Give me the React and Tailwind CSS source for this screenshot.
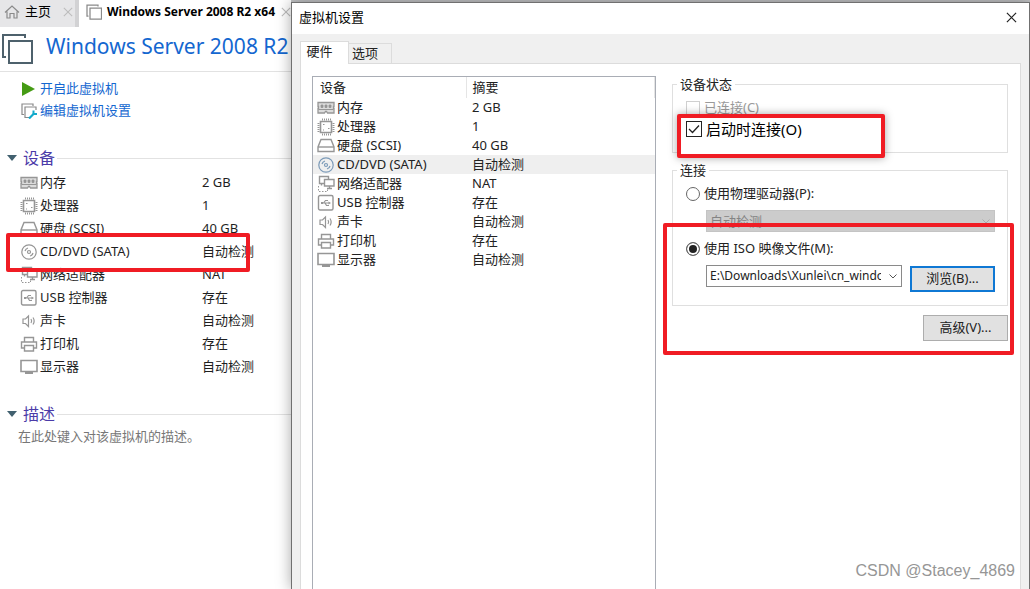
import React from 'react';
import clsx from 'clsx';

const icons = {
  memory: (
    <>
      <path d="M1 3.5h16v4h-.5v2h.5v4.500h-6.500l-1-1.500h-1l-1 1.500H1V9.500h.5v-2H1z" fill="#dcdcdc" strokeWidth="1.300" />
      <path d="M1.500 10.500h15" />
      <path d="M4 6h2v2.500H4zM8 6h2v2.500H8zM12 6h2v2.500h-2z" fill="#969696" strokeWidth="0.8" />
    </>
  ),
  cpu: (
    <>
      <path d="M3.500 3.500h11v11h-11z" strokeWidth="1.600" />
      <path d="M5.500.5v2M7.500.5v2M9.500.5v2M11.500.5v2M13.500.5v2M5.500 15.500v2M7.500 15.500v2M9.500 15.500v2M11.500 15.500v2M13.500 15.500v2M.5 5.500h2M.5 7.500h2M.5 9.500h2M.5 11.500h2M.5 13.500h2M15.500 5.500h2M15.500 7.500h2M15.500 9.500h2M15.500 11.500h2M15.500 13.500h2" />
      <path d="M6 6.500h1.500M11 10.500h1.500M6 12h1" strokeWidth="1.200" />
    </>
  ),
  disk: (
    <>
      <path d="M4 2.500h10l3 7.500v4.500H1V10z" strokeWidth="1.400" />
      <path d="M1 10h16" strokeWidth="1.400" />
    </>
  ),
  cd: (
    <>
      <circle cx="9" cy="9" r="7.200" strokeWidth="1.200" />
      <circle cx="9" cy="9" r="1.500" strokeWidth="1.200" />
      <path d="M5 8A4.300 4.300 0 0 1 8 5M13 10a4.300 4.300 0 0 1-3 3" strokeWidth="1.200" />
    </>
  ),
  network: (
    <>
      <path d="M7 8.500H2.500v-7h9v3" strokeWidth="1.400" />
      <path d="M4.500 8.500v2" strokeWidth="1.400" />
      <path d="M7.500 4.500h9.500v6.500H7.500zM12.500 11v2.500M10 13.500h5" fill="#fff" strokeWidth="1.400" />
      <path d="M1.500 11v5.500h9V14.500" strokeDasharray="1.500 1.500" />
    </>
  ),
  usb: (
    <>
      <rect x="1.500" y="1.500" width="14.500" height="14.500" rx="1.500" strokeWidth="1.400" />
      <path d="M5 9h7M6.500 9l2-2.500h2.500M8 9l1.500 2.500H12" strokeWidth="1.200" />
      <path d="M11.500 7.500v3l2.500-1.500zM4 8h2v2H4z" fill="currentColor" stroke="none" />
    </>
  ),
  sound: (
    <>
      <path d="M3 7h2.500L8.500 4v10.500l-3-3H3z" strokeWidth="1.200" />
      <path d="M11 7q1.300 2 0 4M13 5.500q2.300 3.500 0 7" strokeWidth="1.200" />
    </>
  ),
  printer: (
    <>
      <path d="M4.500 7V2.500h9V7" strokeWidth="1.400" />
      <path d="M4.500 13H1.500V7h15v6h-3" strokeWidth="1.400" />
      <path d="M4.500 10.500h9v5.500h-9z" strokeWidth="1.400" />
    </>
  ),
  display: (
    <>
      <path d="M1 2.500h16v11H1z" strokeWidth="1.600" />
      <path d="M5 15h8" strokeWidth="2" />
    </>
  ),
};

const devices = [
  { icon: 'memory', name: '内存', summary: '2 GB' },
  { icon: 'cpu', name: '处理器', summary: '1' },
  { icon: 'disk', name: '硬盘 (SCSI)', summary: '40 GB' },
  { icon: 'cd', name: 'CD/DVD (SATA)', summary: '自动检测' },
  { icon: 'network', name: '网络适配器', summary: 'NAT' },
  { icon: 'usb', name: 'USB 控制器', summary: '存在' },
  { icon: 'sound', name: '声卡', summary: '自动检测' },
  { icon: 'printer', name: '打印机', summary: '存在' },
  { icon: 'display', name: '显示器', summary: '自动检测' },
];

const DeviceIcon = ({ name, className }) => (
  <svg
    viewBox="0 0 18 18"
    className={clsx('size-[18px] shrink-0', className)}
    fill="none"
    stroke="currentColor"
    aria-hidden="true"
  >
    {icons[name]}
  </svg>
);

const Cross = ({ className }) => (
  <svg viewBox="0 0 12 12" className={className} fill="none" stroke="currentColor" aria-hidden="true">
    <path d="M1 1l10 10M11 1L1 11" strokeWidth="1.300" />
  </svg>
);

const Windows = ({ className, strokeWidth }) => (
  <svg viewBox="0 0 32 32" className={className} fill="none" stroke="currentColor" strokeWidth={strokeWidth} aria-hidden="true">
    <path d="M5 24H2V2h22v3" />
    <path d="M8 8h23v22H8z" />
  </svg>
);

const SectionTitle = ({ children }) => (
  <div className="flex h-5 items-center pl-[7px]">
    <svg viewBox="0 0 10 6" className="h-[6px] w-[10px] text-[#41606f]" fill="currentColor" aria-hidden="true">
      <path d="M0 0h10L5 6z" />
    </svg>
    <h2 className="ml-[6px] text-[16px] leading-5 text-[#4b3ba8]">{children}</h2>
    <div className="ml-[2px] h-px flex-1 bg-[#e2e2e2]" />
  </div>
);

const Select = ({ className, children, ...props }) => (
  <div className={clsx('relative h-[22px]', className)}>
    <select
      {...props}
      className="h-full w-full appearance-none border border-[#8a8a8a] bg-white pr-5 pl-[3px] text-[12px] leading-5 text-[#222] opacity-100 outline-none disabled:border-[#c4c4c4] disabled:bg-[#cccccc] disabled:text-[13px] disabled:text-[#848484]"
    >
      {children}
    </select>
    <svg
      viewBox="0 0 8 5"
      className={clsx('pointer-events-none absolute top-[9px] right-[5px] h-[5px] w-2', props.disabled ? 'text-[#aaa]' : 'text-[#555]')}
      fill="none"
      stroke="currentColor"
      aria-hidden="true"
    >
      <path d="M.5.5L4 4 7.500.5" />
    </svg>
  </div>
);

const Radio = ({ label, ...props }) => (
  <label className="flex h-4 items-center">
    <input
      type="radio"
      name="connection"
      {...props}
      className="mr-1 size-[14px] appearance-none rounded-full border border-[#666] bg-white checked:bg-[#222] checked:shadow-[inset_0_0_0_2px_#fff]"
    />
    {label}
  </label>
);

const MainWindow = () => (
  <main className="w-[291px] shrink-0 overflow-hidden bg-white whitespace-nowrap">
    {/* Tabs */}
    <div className="flex h-[27px] bg-[#e6e6e8] text-black">
      <div className="flex w-[80px] items-center pb-[3px] pl-1">
        <svg viewBox="0 0 16 16" className="size-4 text-[#8a8a8a]" fill="none" stroke="currentColor" strokeWidth="1.200" aria-hidden="true">
          <path d="M1 8.500L8 2l7 6.500M3 7.500V14h3V9.500h4V14h3V7.500" />
        </svg>
        <button className="ml-[5px] text-[13px]">主页</button>
        <button aria-label="关闭主页" className="ml-3 text-[#bdbdbd]">
          <Cross className="size-[10px]" />
        </button>
      </div>
      <div className="w-1 bg-[#d2d2d4]" />
      <div className="flex flex-1 items-center bg-white pb-[3px] pl-[7px]">
        <Windows className="size-4 shrink-0 text-[#8a8a8a]" strokeWidth="2.500" />
        <button className="ml-[5px] text-[12px] font-bold">Windows Server 2008 R2 x64</button>
        <button aria-label="关闭标签页" className="ml-[6px] text-[#bdbdbd]">
          <Cross className="size-[10px]" />
        </button>
      </div>
    </div>

    <header className="flex h-[45px] items-center border-b border-[#e2e2e2] pb-1 pl-[1px]">
      <Windows className="mt-1 size-8 shrink-0 text-[#4e616c]" strokeWidth="2" />
      <h1 className="ml-[13px] text-[21px] text-[#1467d0]">Windows Server 2008 R2</h1>
    </header>

    <nav className="flex flex-col pt-[6px] pl-[21px] text-[#1467d0]">
      <a href="#start" className="flex h-[22px] items-center">
        <svg viewBox="0 0 14 14" className="mr-[5px] size-[14px] text-[#459b14]" fill="currentColor" aria-hidden="true">
          <path d="M1 0l13 7-13 7z" />
        </svg>
        开启此虚拟机
      </a>
      <a href="#edit" className="flex h-[22px] items-center">
        <svg viewBox="0 0 16 16" className="mr-[3px] size-4" fill="none" stroke="#8a8a8a" strokeWidth="1.200" aria-hidden="true">
          <path d="M3 11.500H1V1h11v2" />
          <path d="M8 14.500H4V4h11v3" />
          <path d="M8 15.500l4.500-4.500" stroke="#12aacb" strokeWidth="2.200" />
          <path d="M12.500 7.500v3.500H16" stroke="#12aacb" strokeWidth="2" />
        </svg>
        编辑虚拟机设置
      </a>
    </nav>

    <section className="mt-[26px]">
      <SectionTitle>设备</SectionTitle>
      <div className="relative mt-[3px]">
        <table className="text-[#1f1f1f]">
          <tbody>
            {devices.map((device) => (
              <tr key={device.name} className="h-[23px]">
                <td className="w-[202px] p-0 pl-5">
                  <div className="flex items-center gap-[2px]">
                    <DeviceIcon name={device.icon} className="text-[#969696]" />
                    {device.name}
                  </div>
                </td>
                <td className="p-0">{device.summary}</td>
              </tr>
            ))}
          </tbody>
        </table>
        <div className="absolute top-[62px] left-[6px] h-[39px] w-[244px] rounded-[2px] border-4 border-[#f01c24]" />
      </div>
    </section>

    <section className="mt-[26px]">
      <SectionTitle>描述</SectionTitle>
      <p className="mt-[2px] pl-[18px] leading-5 text-[#777]">在此处键入对该虚拟机的描述。</p>
    </section>
  </main>
);

const DeviceList = () => (
  <div className="-mb-1 flex-1 border border-[#a9adb5]">
    <table className="w-full text-left leading-[19px] text-[#222]">
      <thead>
        <tr className="h-[21px]">
          <th className="w-[153px] border-r border-[#e5e5e5] p-0 pl-[7px] font-normal">设备</th>
          <th className="border-r border-[#e5e5e5] p-0 pl-[6px] font-normal">摘要</th>
        </tr>
      </thead>
      <tbody>
        {devices.map((device) => (
          <tr key={device.name} className={clsx('h-[19px]', device.icon === 'cd' && 'bg-[#efefef]')}>
            <td className="p-0 pl-1">
              <div className="flex h-[19px] items-center gap-[2px]">
                <DeviceIcon name={device.icon} className={device.icon === 'cd' ? 'text-[#7b9ab8]' : 'text-[#969696]'} />
                {device.name}
              </div>
            </td>
            <td className="p-0 pl-[6px]">{device.summary}</td>
          </tr>
        ))}
      </tbody>
    </table>
  </div>
);

const DriveSettings = () => (
  <div className="relative w-[336px] self-start text-[#222]">
    <fieldset className="border border-[#dfdfdf]">
      <legend className="ml-1 px-[3px] leading-4">设备状态</legend>
      <div className="pt-2 pl-[13px]">
        <label className="flex h-4 items-center text-[#9a9a9a]">
          <input type="checkbox" disabled className="mr-1 size-[14px] appearance-none border border-[#d0d0d0] bg-white" />
          已连接(C)
        </label>
      </div>
      <div className="relative -mt-[2px] -mb-[6px] ml-1 h-11 w-[208px] rounded-[2px] border-4 border-[#f01c24] bg-white pt-[3px] pl-[5px] shadow-[0_0_8px_rgba(0,0,0,0.35)]">
        <label className="flex h-4 items-center text-[15px] text-black">
          <span className="relative mr-1 size-4">
            <input type="checkbox" defaultChecked className="peer block size-4 appearance-none border border-[#222] bg-white" />
            <svg viewBox="0 0 16 16" className="pointer-events-none absolute inset-0 hidden size-4 peer-checked:block" fill="none" stroke="#222" strokeWidth="1.300" aria-hidden="true">
              <path d="M3 8l3.500 3.500L13 4.500" />
            </svg>
          </span>
          启动时连接(O)
        </label>
      </div>
    </fieldset>

    <fieldset className="mt-[9px] border border-[#dfdfdf] pb-[13px]">
      <legend className="ml-1 px-[3px] leading-4">连接</legend>
      <div className="pt-2 pr-3 pl-[13px]">
        <Radio label="使用物理驱动器(P):" />
        <Select disabled aria-label="物理驱动器" className="mt-2 ml-5">
          <option>自动检测</option>
        </Select>
        <div className="mt-[9px]">
          <Radio label="使用 ISO 映像文件(M):" defaultChecked />
        </div>
        <div className="mt-2 ml-5 flex gap-2">
          <Select aria-label="ISO 映像文件" className="min-w-0 flex-1">
            <option>E:\Downloads\Xunlei\cn_windows_server</option>
          </Select>
          <button className="mt-px h-[26px] w-[85px] border-2 border-[#0f78d4] bg-[#e1e1e1]">浏览(B)...</button>
        </div>
      </div>
    </fieldset>

    <button className="mt-[9px] ml-auto block h-[26px] w-[85px] border border-[#adadad] bg-[#e1e1e1]">高级(V)...</button>

    <div className="pointer-events-none absolute -right-[6px] -bottom-[14px] -left-[9px] h-[132px] rounded-[2px] border-4 border-[#f01c24]" />
  </div>
);

const SettingsDialog = () => (
  <div
    role="dialog"
    aria-labelledby="dialog-title"
    className="relative mt-[2px] flex min-w-0 flex-1 flex-col overflow-y-clip border border-b-0 border-[#707070] bg-[#f0f0f0] shadow-[0_0_14px_rgba(0,0,0,0.35)]"
  >
    <div className="flex h-[31px] items-center justify-between bg-white pr-3 pb-[2px] pl-[7px]">
      <h2 id="dialog-title" className="text-black">虚拟机设置</h2>
      <button aria-label="关闭" className="text-[#222]">
        <Cross className="size-[11px]" />
      </button>
    </div>

    <div className="flex flex-1 flex-col px-2 pt-[7px]">
      <div role="tablist" className="flex items-end">
        <button role="tab" aria-selected="true" className="relative -mb-px h-[23px] w-[49px] border border-b-0 border-[#dcdcdc] bg-white pr-[10px] pb-[2px] text-[#222]">硬件</button>
        <button role="tab" aria-selected="false" className="h-5 w-[43px] border border-b-0 border-l-0 border-[#dcdcdc] pr-[10px] text-[#222]">选项</button>
      </div>
      <div className="flex flex-1 gap-4 border border-b-0 border-[#dcdcdc] bg-white pt-3 pr-3 pl-[11px]">
        <DeviceList />
        <DriveSettings />
      </div>
    </div>
  </div>
);

export default function App() {
  return (
    <div className="relative flex min-h-screen bg-[#c3c4c6] font-['Noto_Sans','Noto_Sans_CJK_SC',sans-serif] text-[13px]">
      <MainWindow />
      <SettingsDialog />
      <p className="absolute right-[15px] bottom-2 font-['Liberation_Sans',sans-serif] text-[16px] leading-5 text-[#969696]">
        CSDN @Stacey_4869
      </p>
    </div>
  );
}
